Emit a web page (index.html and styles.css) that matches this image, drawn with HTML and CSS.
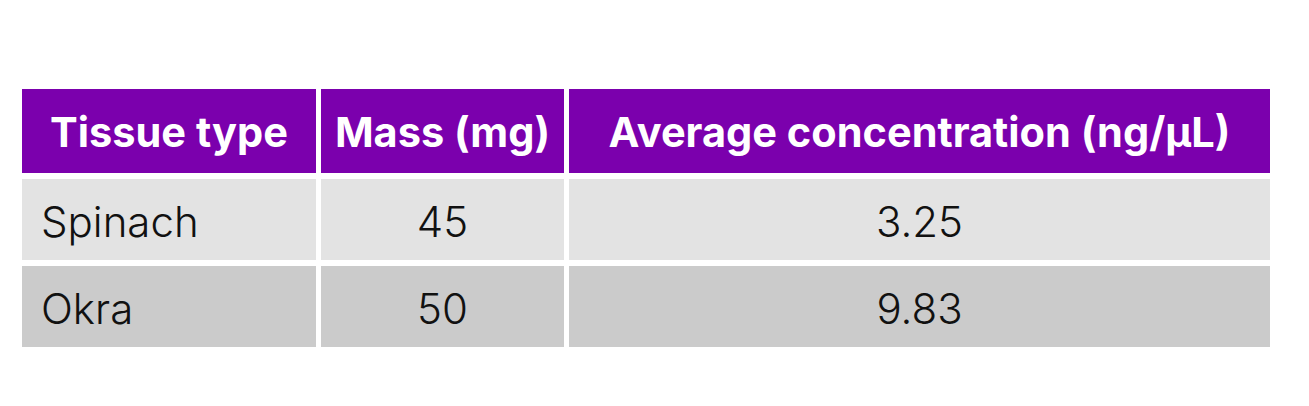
FILE: index.html
```html
<!DOCTYPE html>
<html lang="en">
<head>
<meta charset="utf-8">
<title>Tissue table</title>
<link rel="stylesheet" href="styles.css">
</head>
<body>
<div class="page">
  <div class="table">
    <div class="cell head">Tissue type</div>
    <div class="cell head">Mass (mg)</div>
    <div class="cell head">Average concentration (ng/µL)</div>
    <div class="cell light left">Spinach</div>
    <div class="cell light">45</div>
    <div class="cell light">3.25</div>
    <div class="cell dark left">Okra</div>
    <div class="cell dark">50</div>
    <div class="cell dark">9.83</div>
  </div>
</div>
</body>
</html>
```
FILE: styles.css
```css
html, body {
  margin: 0;
  padding: 0;
  background: #ffffff;
}
.page {
  width: 1309px;
  height: 406px;
  padding: 89px 0 0 22px;
  box-sizing: border-box;
}
.table {
  display: grid;
  grid-template-columns: 294px 243px 701px;
  grid-template-rows: 84px 81px 81px;
  column-gap: 5px;
  row-gap: 6px;
  width: 1248px;
}
.cell {
  display: flex;
  align-items: center;
  justify-content: center;
  font-family: "Inter", "Liberation Sans", sans-serif;
  font-size: 42px;
  font-weight: 300;
  color: #111111;
  padding-top: 3px;
}
.head {
  background: #7b00ad;
  color: #ffffff;
  font-weight: 700;
  font-size: 41.5px;
  padding-top: 2px;
}
.light {
  background: #e3e3e3;
}
.dark {
  background: #cbcbcb;
}
.left {
  justify-content: flex-start;
  padding-left: 19px;
}
```
